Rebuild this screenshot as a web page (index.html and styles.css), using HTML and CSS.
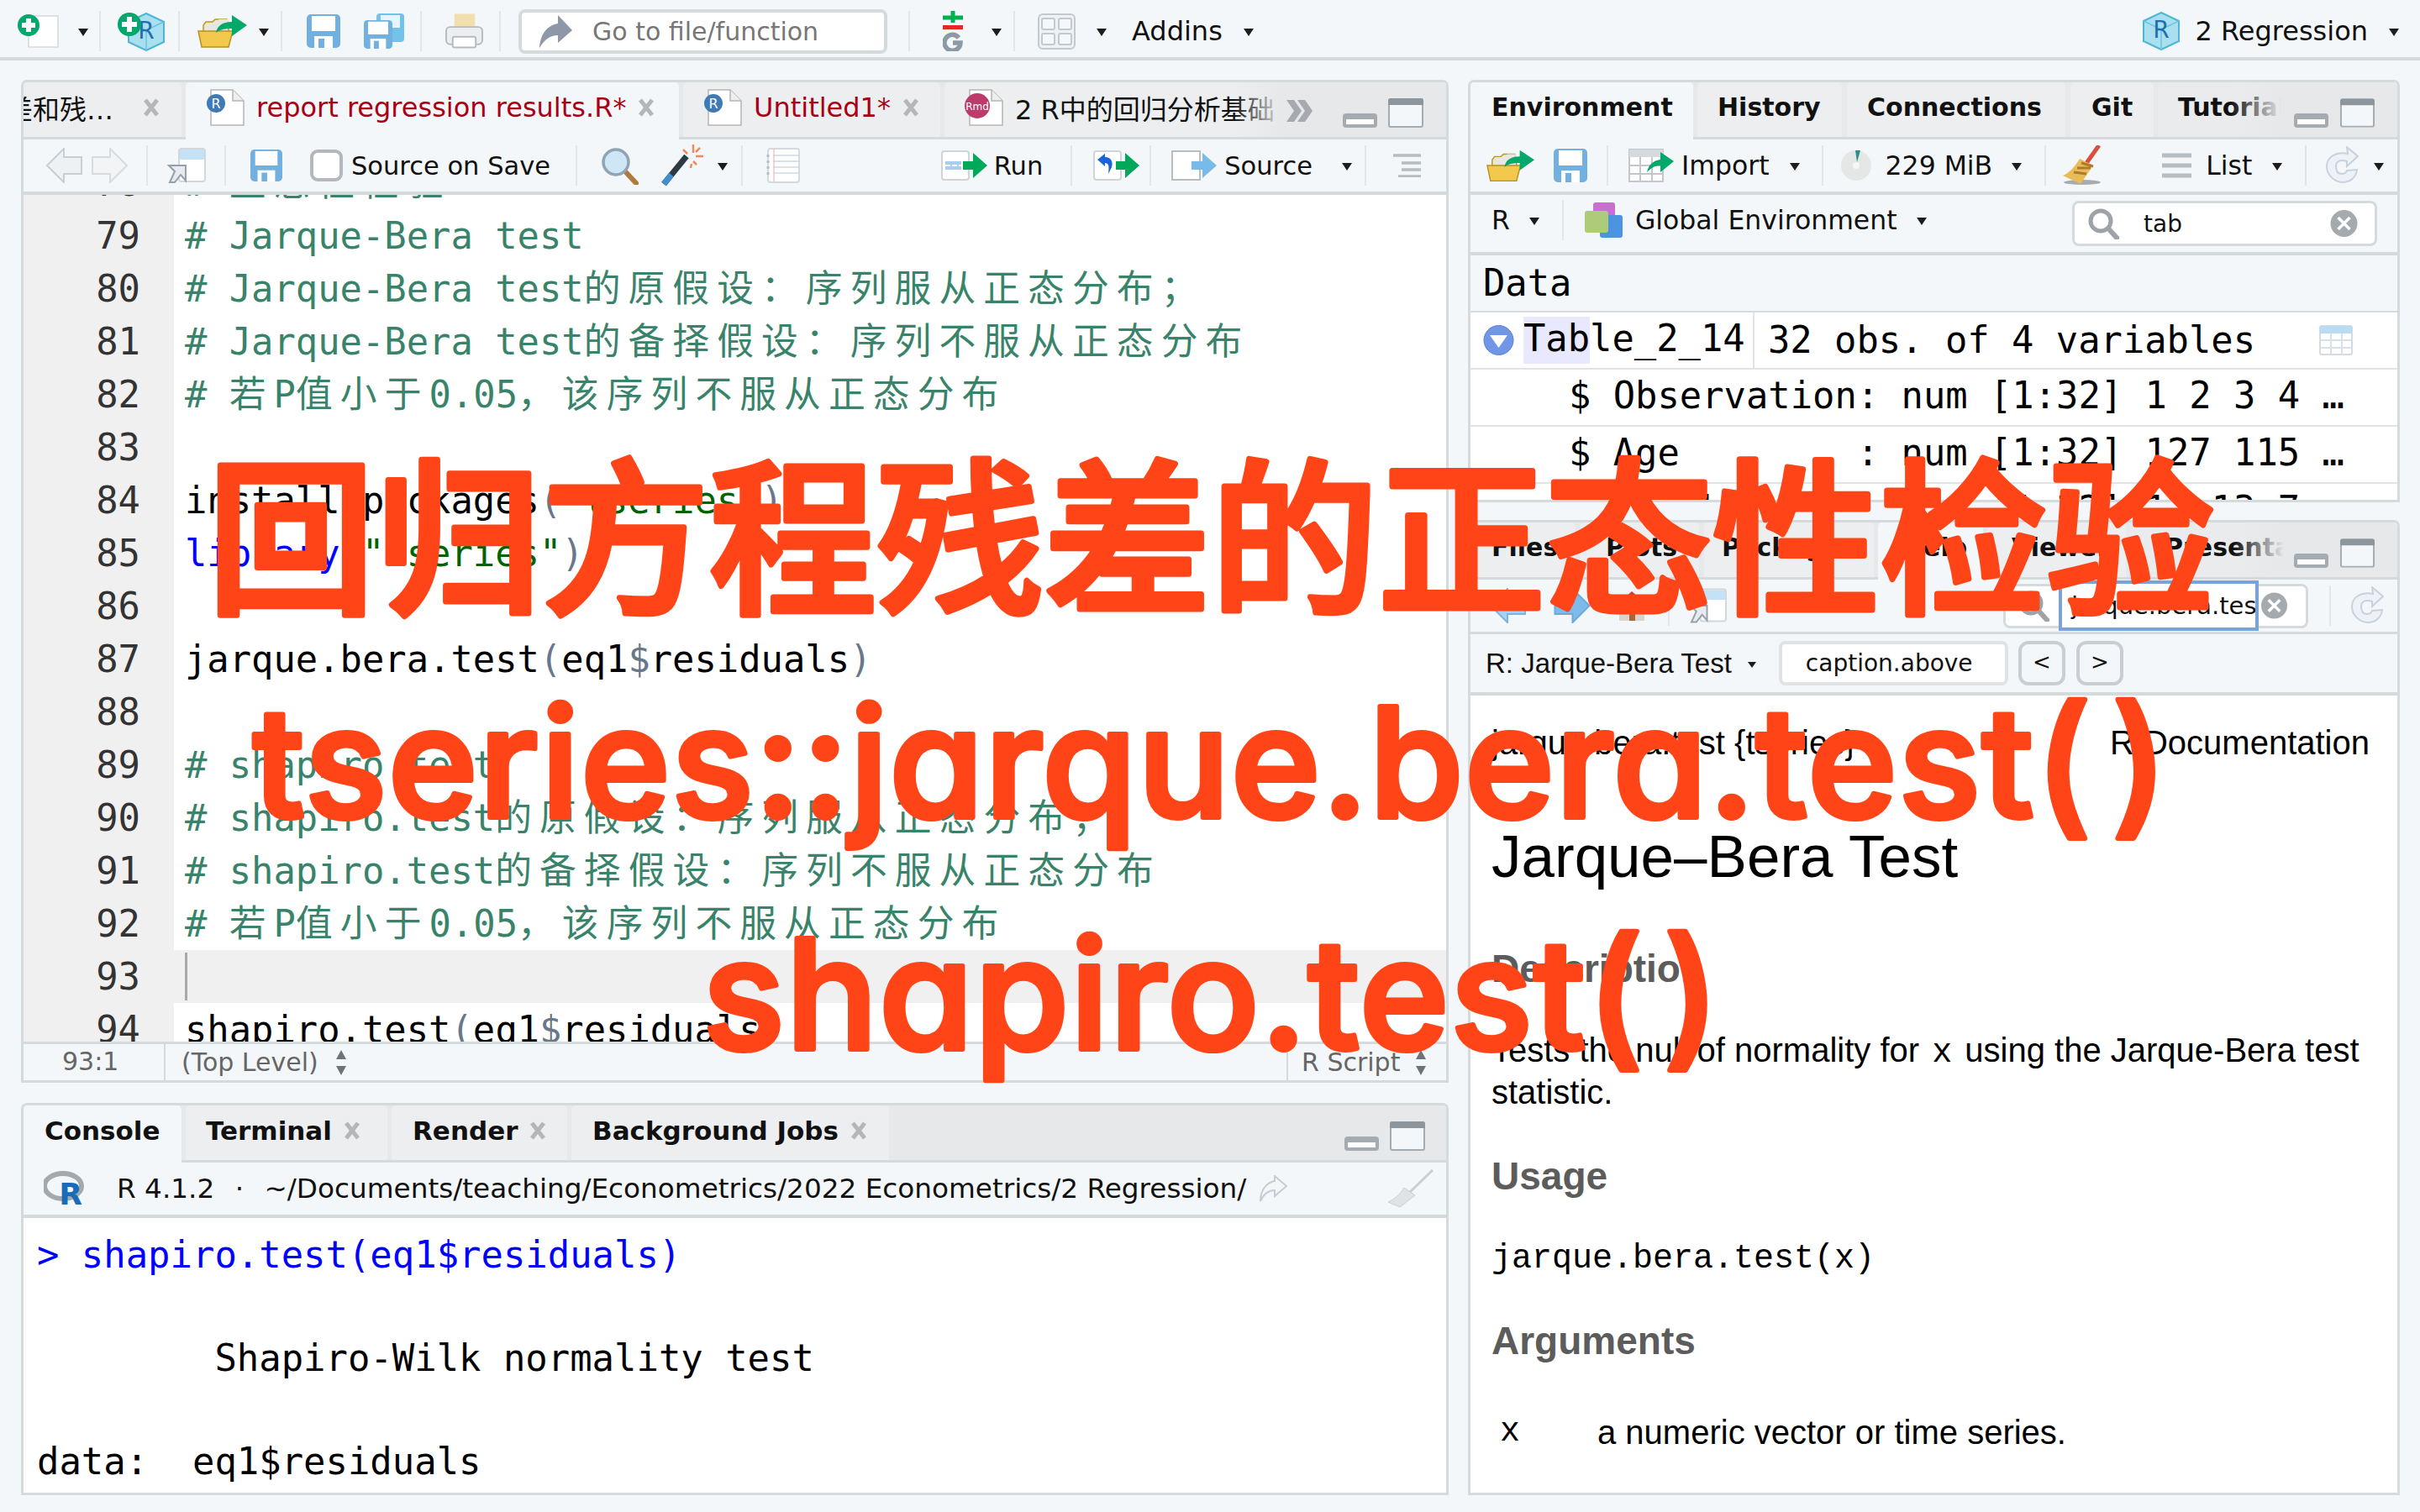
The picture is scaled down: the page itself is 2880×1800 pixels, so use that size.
FILE: index.html
```html
<!DOCTYPE html>
<html lang="zh">
<head>
<meta charset="utf-8">
<title>RStudio</title>
<link rel="stylesheet" href="styles.css">
</head>
<body>
<svg class="sprite" width="0" height="0">
  <symbol id="i-new" viewBox="0 0 50 40"><rect x="14" y="2" width="35" height="37" fill="#fff" stroke="#d5d9dc" stroke-width="1.5"/><circle cx="14" cy="13" r="13" fill="#00a86b"/><path d="M14 5v16M6 13h16" stroke="#fff" stroke-width="6"/></symbol>
  <symbol id="i-cube" viewBox="0 0 44 46"><path d="M22 1 43 11V35L22 45 1 35V11Z" fill="#a9dfef" stroke="#4db6d6" stroke-width="2"/><path d="M1 11 22 21 43 11M22 21V45" fill="none" stroke="#6cc5df" stroke-width="1.5"/><text x="22" y="31" text-anchor="middle" class="svgr" fill="#1f6fae" font-size="28">R</text></symbol>
  <symbol id="i-proj" viewBox="0 0 56 47"><use href="#i-cube" x="12" y="1" width="44" height="46"/><circle cx="14" cy="15" r="14" fill="#00a86b"/><path d="M14 6v18M5 15h18" stroke="#fff" stroke-width="6"/></symbol>
  <symbol id="i-open" viewBox="0 0 60 40"><path d="M7 36V13l3-4h8l3-3h14l2 8v22Z" fill="#efe7c0" stroke="#b7982e" stroke-width="1.5"/><path d="M11 14 26 6h10v16H11Z" fill="#e6e6e2"/><path d="M1 20H42L37 39H5Z" fill="#f2c94c" stroke="#b8911f" stroke-width="1.5"/><path d="M22 22C24 12 32 9 41 9V1L59 13 41 26V17C33 17 27 18 22 22Z" fill="#00a86b"/></symbol>
  <symbol id="i-save" viewBox="0 0 40 40"><rect width="40" height="40" rx="5" fill="#72b0df"/><rect x="6" y="2" width="28" height="18" fill="#fff"/><rect x="9" y="26" width="22" height="14" fill="#fff"/><rect x="14" y="29" width="7" height="11" fill="#72b0df"/></symbol>
  <symbol id="i-saveall" viewBox="0 0 48 42"><rect x="15" width="33" height="34" rx="4" fill="#72c3ea"/><rect x="20" y="2" width="23" height="15" fill="#e7f4fb"/><use href="#i-save" y="8" width="34" height="34"/></symbol>
  <symbol id="i-print" viewBox="0 0 46 42"><rect x="11" width="25" height="24" fill="#f1dfae"/><rect x="1" y="16" width="44" height="21" rx="5" fill="#eceef0" stroke="#b5bbc1" stroke-width="2"/><rect x="9" y="28" width="28" height="13" rx="2" fill="#fff" stroke="#b5bbc1" stroke-width="2"/></symbol>
  <symbol id="i-goto" viewBox="0 0 40 40"><path d="M23 1 40 19 23 34V25C14 25 7 30 1 40 2 24 10 13 23 11Z" fill="#8e97a8"/></symbol>
  <symbol id="i-git" viewBox="0 0 24 48"><path d="M12 0V14M0 8H24" stroke="#00b050" stroke-width="5"/><rect y="17" width="24" height="5" fill="#e02b20"/><path d="M19 32A9.500 9.500 0 1 0 21 38H12" fill="none" stroke="#8d9aa6" stroke-width="5.500"/></symbol>
  <symbol id="i-grid" viewBox="0 0 45 43"><rect x="1" y="1" width="43" height="41" rx="5" fill="#eef2f4" stroke="#c2c9cf" stroke-width="2"/><g fill="#f5f8fa" stroke="#c2c9cf" stroke-width="2"><rect x="5" y="6" width="15" height="13" rx="2"/><rect x="25" y="6" width="15" height="13" rx="2"/><rect x="5" y="24" width="15" height="13" rx="2"/><rect x="25" y="24" width="15" height="13" rx="2"/></g></symbol>
  <symbol id="i-docr" viewBox="0 0 46 44"><path d="M6 1H32L45 14V43H6Z" fill="#fff" stroke="#b5b5b5" stroke-width="1.500"/><path d="M32 1V14H45" fill="#eee" stroke="#b5b5b5" stroke-width="1.500"/><circle cx="12" cy="17" r="11" fill="#3f79b8"/><text x="12" y="23" text-anchor="middle" class="svgr" fill="#fff" font-size="16">R</text></symbol>
  <symbol id="i-docrmd" viewBox="0 0 46 44"><path d="M6 1H32L45 14V43H6Z" fill="#fff" stroke="#b5b5b5" stroke-width="1.500"/><path d="M32 1V14H45" fill="#eee" stroke="#b5b5b5" stroke-width="1.500"/><circle cx="15" cy="20" r="15" fill="#bc3a6c"/><text x="15" y="25" text-anchor="middle" class="svgr" fill="#fff" font-size="12">Rmd</text></symbol>
  <symbol id="i-x" viewBox="0 0 20 24"><path d="M3 3 17 21M17 3 3 21" stroke="#b4b7ba" stroke-width="5"/></symbol>
  <symbol id="i-chev" viewBox="0 0 34 28"><path d="M2 1H11L20 14 11 27H2L11 14ZM15 1H24L33 14 24 27H15L24 14Z" fill="#a6aaaf"/></symbol>
  <symbol id="i-min" viewBox="0 0 41 17"><rect width="41" height="17" rx="4" fill="#a4abb1"/><rect x="4" y="7" width="33" height="6" fill="#fff"/></symbol>
  <symbol id="i-max" viewBox="0 0 42 35"><rect x="1" y="1" width="40" height="33" rx="2" fill="#f3f7f9" stroke="#a4abb1" stroke-width="2"/><path d="M0 3a3 3 0 0 1 3-3H39a3 3 0 0 1 3 3V8H0Z" fill="#8e969d"/></symbol>
  <symbol id="i-back" viewBox="0 0 43 42"><path d="M1 21 21 1V11H42V31H21V41Z" fill="#eef1f3" stroke="#c9ced3" stroke-width="2"/></symbol>
  <symbol id="i-fwd" viewBox="0 0 43 42"><path d="M42 21 22 1V11H1V31H22V41Z" fill="#f2f4f6" stroke="#d7dbdf" stroke-width="2"/></symbol>
  <symbol id="i-bback" viewBox="0 0 43 42"><path d="M1 21 21 1V11H42V31H21V41Z" fill="#a6d3f3" stroke="#7db4de" stroke-width="2"/></symbol>
  <symbol id="i-bfwd" viewBox="0 0 43 42"><path d="M42 21 22 1V11H1V31H22V41Z" fill="#7cbbea" stroke="#6aa9dc" stroke-width="2"/></symbol>
  <symbol id="i-win" viewBox="0 0 46 42"><rect x="14" y="1" width="31" height="39" rx="3" fill="#fff" stroke="#d2d7dc" stroke-width="2"/><rect x="15" y="2" width="29" height="12" fill="#c4e1f5"/><path d="M3 41 9 28 2 21H22V39L16 32 9 41Z" fill="#e7ebee" stroke="#94a0ab" stroke-width="2"/></symbol>
  <symbol id="i-mag" viewBox="0 0 45 45"><path d="M28 28 42 43" stroke="#b07a3c" stroke-width="6" stroke-linecap="round"/><circle cx="18" cy="18" r="15" fill="#cfe6f7" stroke="#8fa5b6" stroke-width="3.500"/></symbol>
  <symbol id="i-wand" viewBox="0 0 52 50"><path d="M5 47 32 14" stroke="#2d3a44" stroke-width="7"/><path d="M5 47 14 36" stroke="#3f8fd0" stroke-width="7"/><path d="M40 0V10M52 14H43M48 4 43 9M28 6 33 11M44 24 40 20M38 23 37 28" stroke="#f08a5d" stroke-width="2.500"/></symbol>
  <symbol id="i-note" viewBox="0 0 40 42"><rect x="2" y="1" width="37" height="40" rx="3" fill="#fff" stroke="#d4d9de" stroke-width="2"/><path d="M8 9H38M8 16H38M8 23H38M8 30H38" stroke="#d7e4ee" stroke-width="2"/><path d="M9 2V40" stroke="#f2c6c6" stroke-width="1.500"/><path d="M2 8V36" stroke="#b6bdc3" stroke-width="3" stroke-dasharray="3 4"/></symbol>
  <symbol id="i-run" viewBox="0 0 55 36"><rect x="1" y="1" width="32" height="34" rx="3" fill="#fff" stroke="#cfd4d8" stroke-width="2"/><rect x="5" y="13" width="19" height="10" fill="#a7cdf1"/><path d="M5 18h19" stroke="#fff" stroke-width="2" stroke-dasharray="6 2"/><path d="M26 13H38V3L55 18 38 33V23H26Z" fill="#00a85a"/></symbol>
  <symbol id="i-rerun" viewBox="0 0 55 36"><rect x="1" y="1" width="32" height="34" rx="3" fill="#fff" stroke="#cfd4d8" stroke-width="2"/><path d="M5 11 14 4V8C21 8 24 13 22 20L18 28C19 20 19 15 14 15V19Z" fill="#1a63d8"/><path d="M27 13H38V3L55 18 38 33V23H27Z" fill="#00a85a"/></symbol>
  <symbol id="i-src" viewBox="0 0 54 36"><path d="M1 1H34V35H1Z" fill="#fff" stroke="#b8bdc1" stroke-width="2"/><path d="M24 13H37V3L54 18 37 33V23H24Z" fill="#79bae8"/></symbol>
  <symbol id="i-outline" viewBox="0 0 33 28"><path d="M0 2H33M10 11H33M10 19H33M6 27H33" stroke="#b5bcc2" stroke-width="3.500"/></symbol>
  <symbol id="i-import" viewBox="0 0 54 40"><rect x="1" y="1" width="40" height="38" fill="#fff" stroke="#c1c7cc" stroke-width="2"/><rect x="1" y="1" width="40" height="9" fill="#d5dade"/><path d="M14 10V39M28 10V39M1 20H41M1 30H41" stroke="#c1c7cc" stroke-width="2"/><path d="M22 28C24 18 31 14 38 13V4L54 15 38 28V20C31 20 27 23 22 28Z" fill="#00a86b"/></symbol>
  <symbol id="i-pie" viewBox="0 0 36 38"><circle cx="18" cy="19" r="18" fill="#e5e6e6"/><circle cx="18" cy="19" r="4" fill="#f3f7f9"/><path d="M17 1H23L19 15Z" fill="#2a8f85"/></symbol>
  <symbol id="i-broom" viewBox="0 0 48 48"><ellipse cx="24" cy="44" rx="22" ry="3" fill="#a8acae"/><path d="M44 0 27 24" stroke="#d9503e" stroke-width="5"/><path d="M21 16 37 24 22 46 1 36C8 33 15 26 21 16Z" fill="#e9bc5a"/><path d="M18 27 34 27M14 32 29 34M23 21 37 25" stroke="#b07a2a" stroke-width="3"/></symbol>
  <symbol id="i-list" viewBox="0 0 35 30"><path d="M0 3H35M0 15H35M0 27H35" stroke="#b5bcc2" stroke-width="5"/></symbol>
  <symbol id="i-refresh" viewBox="0 0 41 46"><path d="M28 9C14 6 3 13 3 24S13 43 22 43C31 43 38 37 39 28L27 29C26 32 24 33 21 33 16 33 14 29 14 24S18 15 27 18V24L40 12 27 1Z" fill="#edf2f6" stroke="#c7d2dc" stroke-width="2"/></symbol>
  <symbol id="i-env" viewBox="0 0 45 42"><rect x="10" width="26" height="26" rx="3" fill="#c86fcf"/><rect x="18" y="15" width="27" height="27" rx="3" fill="#4c93e0"/><rect y="10" width="28" height="26" rx="3" fill="#aecb7a"/></symbol>
  <symbol id="i-search" viewBox="0 0 37 37"><path d="M24 24 34 35" stroke="#9da3a9" stroke-width="6" stroke-linecap="round"/><circle cx="15" cy="15" r="12" fill="#fff" stroke="#9da3a9" stroke-width="5"/></symbol>
  <symbol id="i-clear" viewBox="0 0 32 34"><circle cx="16" cy="17" r="16" fill="#a5aaaf"/><path d="M9 10 23 24M23 10 9 24" stroke="#fff" stroke-width="3.500"/></symbol>
  <symbol id="i-expand" viewBox="0 0 37 36"><circle cx="18.500" cy="18" r="17.500" fill="#6f97e6" stroke="#5a82d0"/><path d="M8 12H29L18.500 27Z" fill="#fff"/></symbol>
  <symbol id="i-table" viewBox="0 0 40 36"><rect x="1" y="1" width="38" height="34" rx="2" fill="#fff" stroke="#d3dce3" stroke-width="2"/><rect x="1" y="1" width="38" height="9" fill="#b9dcf3"/><path d="M14 10V35M27 10V35M1 18H39M1 27H39" stroke="#d8e1e8" stroke-width="2"/></symbol>
  <symbol id="i-home" viewBox="0 0 40 36"><path d="M2 17 20 1 38 17Z" fill="#c93c2e"/><rect x="5" y="14" width="30" height="22" fill="#d9d5cc"/><rect x="17" y="14" width="7" height="22" fill="#a8663a"/></symbol>
  <symbol id="i-rlogo" viewBox="0 0 48 42"><ellipse cx="23" cy="18" rx="22" ry="15" fill="none" stroke="#a4a9ae" stroke-width="6"/><text x="32" y="40" text-anchor="middle" class="svgr svgb" fill="#1a6cb8" font-size="36">R</text></symbol>
  <symbol id="i-share" viewBox="0 0 34 32"><path d="M19 1 33 13 19 25V18C12 18 6 22 2 31 2 19 8 9 19 7Z" fill="#f4f6f8" stroke="#c6ccd2" stroke-width="2"/></symbol>
  <symbol id="i-broompale" viewBox="0 0 56 46"><path d="M54 1 27 27" stroke="#c9ced3" stroke-width="3"/><path d="M20 22 33 31 15 45 1 39C8 36 15 30 20 22Z" fill="#dfe3e6" stroke="#c9ced3"/></symbol>
  <symbol id="i-updown" viewBox="0 0 14 30"><path d="M7 0 13 11H1ZM7 30 13 19H1Z" fill="#6d7378"/></symbol>
</svg>

<div class="app">
  <header class="topbar">
    <svg class="ml-20" width="50" height="40"><use href="#i-new"/></svg><i class="caret ml-23"></i><i class="sep ml-13"></i>
    <svg class="ml-20" width="56" height="47"><use href="#i-proj"/></svg><i class="sep ml-16"></i>
    <svg class="ml-21" width="60" height="40"><use href="#i-open"/></svg><i class="caret ml-13"></i><i class="sep ml-14"></i>
    <svg class="ml-29" width="40" height="40"><use href="#i-save"/></svg>
    <svg class="ml-28" width="48" height="42"><use href="#i-saveall"/></svg><i class="sep ml-19"></i>
    <svg class="ml-28" width="45" height="42"><use href="#i-print"/></svg><i class="sep ml-19"></i>
    <div class="goto ml-21"><svg width="40" height="40"><use href="#i-goto"/></svg><span>Go to file/function</span></div><i class="sep ml-25"></i>
    <svg class="ml-39" width="24" height="48"><use href="#i-git"/></svg><i class="caret ml-34"></i><i class="sep ml-14"></i>
    <svg class="ml-27" width="45" height="43"><use href="#i-grid"/></svg><i class="caret ml-25"></i>
    <span class="lbl ml-30">Addins</span><i class="caret ml-25"></i>
    <svg class="push" width="44" height="46"><use href="#i-cube"/></svg>
    <span class="lbl ml-18">2 Regression</span><i class="caret ml-25 mr-25"></i>
  </header>

  <main class="workspace">
    <section class="column">
      <div class="pane source">
        <div class="tabs">
          <div class="tab t-prev"><span class="prev-text">差和残…</span><svg class="tx" width="20" height="24"><use href="#i-x"/></svg></div>
          <div class="tab active t-report"><svg width="46" height="44"><use href="#i-docr"/></svg><span class="dirty ml-14">report regression results.R*</span><svg class="ml-14" width="20" height="24"><use href="#i-x"/></svg></div>
          <div class="tab t-untitled"><svg width="46" height="44"><use href="#i-docr"/></svg><span class="dirty ml-14">Untitled1*</span><svg class="ml-14" width="20" height="24"><use href="#i-x"/></svg></div>
          <div class="tab fade t-rmd"><svg width="46" height="44"><use href="#i-docrmd"/></svg><span class="ml-14 nowrap">2 R中的回归分析基础</span></div>
          <svg class="chev" width="34" height="28"><use href="#i-chev"/></svg>
          <svg class="push-min" width="41" height="17"><use href="#i-min"/></svg>
          <svg class="max" width="42" height="35"><use href="#i-max"/></svg>
        </div>
        <div class="bar">
          <svg class="ml-27" width="43" height="42"><use href="#i-back"/></svg>
          <svg class="ml-11" width="43" height="42"><use href="#i-fwd"/></svg><i class="sep ml-22"></i>
          <svg class="ml-23" width="46" height="42"><use href="#i-win"/></svg><i class="sep ml-22"></i>
          <svg class="ml-29" width="38" height="40"><use href="#i-save"/></svg>
          <i class="check ml-33"></i><span class="lbl s30 ml-10">Source on Save</span><i class="sep ml-30"></i>
          <svg class="ml-28" width="45" height="45"><use href="#i-mag"/></svg>
          <svg class="ml-25" width="52" height="50"><use href="#i-wand"/></svg><i class="caret ml-17"></i><i class="sep ml-16"></i>
          <svg class="ml-28" width="40" height="42"><use href="#i-note"/></svg>
          <svg class="push" width="55" height="36"><use href="#i-run"/></svg><span class="lbl s30 ml-8">Run</span><i class="sep ml-33"></i>
          <svg class="ml-25" width="55" height="36"><use href="#i-rerun"/></svg><i class="sep ml-12"></i>
          <svg class="ml-24" width="54" height="36"><use href="#i-src"/></svg><span class="lbl s30 ml-9">Source</span><i class="caret ml-35"></i><i class="sep ml-15"></i>
          <svg class="ml-32 mr-30" width="33" height="28"><use href="#i-outline"/></svg>
        </div>
        <div class="editor">
          <div class="gutter">
            <div>78</div><div>79</div><div>80</div><div>81</div><div>82</div><div>83</div><div>84</div><div>85</div><div>86</div><div>87</div><div>88</div><div>89</div><div>90</div><div>91</div><div>92</div><div class="cur">93</div><div>94</div>
          </div>
          <div class="code">
            <div class="cmt"># <span class="c">正态性检验</span></div>
            <div class="cmt"># Jarque-Bera test</div>
            <div class="cmt"># Jarque-Bera test<span class="c">的原假设：序列服从正态分布；</span></div>
            <div class="cmt"># Jarque-Bera test<span class="c">的备择假设：序列不服从正态分布</span></div>
            <div class="cmt"># <span class="c">若</span>P<span class="c">值小于</span>0.05<span class="c">，该序列不服从正态分布</span></div>
            <div>&nbsp;</div>
            <div>install.packages<b class="op">(</b><span class="str">"tseries"</span><b class="op">)</b></div>
            <div><span class="kw">library</span><b class="op">(</b><span class="str">"tseries"</span><b class="op">)</b></div>
            <div>&nbsp;</div>
            <div>jarque.bera.test<b class="op">(</b>eq1<b class="op">$</b>residuals<b class="op">)</b></div>
            <div>&nbsp;</div>
            <div class="cmt"># shapiro.test</div>
            <div class="cmt"># shapiro.test<span class="c">的原假设：序列服从正态分布；</span></div>
            <div class="cmt"># shapiro.test<span class="c">的备择假设：序列不服从正态分布</span></div>
            <div class="cmt"># <span class="c">若</span>P<span class="c">值小于</span>0.05<span class="c">，该序列不服从正态分布</span></div>
            <div class="cur"><i class="cursor"></i>&nbsp;</div>
            <div>shapiro.test<b class="op">(</b>eq1<b class="op">$</b>residuals<b class="op">)</b></div>
          </div>
        </div>
        <div class="status">
          <div class="st-pos">93:1</div>
          <div class="st-scope">(Top Level)<svg class="ml-20" width="14" height="30"><use href="#i-updown"/></svg></div>
          <div class="st-type">R Script<svg class="ml-18" width="14" height="30"><use href="#i-updown"/></svg></div>
        </div>
      </div>

      <div class="pane console">
        <div class="tabs">
          <div class="tab active bold t-console">Console</div>
          <div class="tab bold t-term">Terminal<svg class="ml-14" width="20" height="24"><use href="#i-x"/></svg></div>
          <div class="tab bold t-render">Render<svg class="ml-14" width="20" height="24"><use href="#i-x"/></svg></div>
          <div class="tab bold t-jobs">Background Jobs<svg class="ml-14" width="20" height="24"><use href="#i-x"/></svg></div>
          <svg class="push-min" width="41" height="17"><use href="#i-min"/></svg>
          <svg class="max" width="42" height="35"><use href="#i-max"/></svg>
        </div>
        <div class="bar">
          <svg class="ml-24" width="48" height="42"><use href="#i-rlogo"/></svg>
          <span class="lbl path ml-39">R 4.1.2 <span class="dot">·</span> ~/Documents/teaching/Econometrics/2022 Econometrics/2 Regression/</span>
          <svg class="ml-15" width="34" height="32"><use href="#i-share"/></svg>
          <svg class="push mr-14" width="56" height="46"><use href="#i-broompale"/></svg>
        </div>
        <pre class="terminal"><span class="kw">&gt; shapiro.test(eq1$residuals)</span>

	Shapiro-Wilk normality test

data:  eq1$residuals</pre>
      </div>
    </section>

    <section class="column">
      <div class="pane env">
        <div class="tabs">
          <div class="tab active bold t-env">Environment</div>
          <div class="tab bold t-hist">History</div>
          <div class="tab bold t-conn">Connections</div>
          <div class="tab bold t-git">Git</div>
          <div class="tab bold fade t-tut">Tutorial</div>
          <svg class="min-r" width="41" height="17"><use href="#i-min"/></svg>
          <svg class="max-r" width="41" height="35"><use href="#i-max"/></svg>
        </div>
        <div class="bar">
          <svg class="ml-19" width="58" height="40"><use href="#i-open"/></svg>
          <svg class="ml-22" width="40" height="40"><use href="#i-save"/></svg><i class="sep ml-23"></i>
          <svg class="ml-24" width="54" height="40"><use href="#i-import"/></svg><span class="lbl ml-9">Import</span><i class="caret ml-24"></i><i class="sep ml-26"></i>
          <svg class="ml-21" width="36" height="38"><use href="#i-pie"/></svg><span class="lbl ml-17">229 MiB</span><i class="caret ml-23"></i><i class="sep ml-27"></i>
          <svg class="ml-19" width="48" height="48"><use href="#i-broom"/></svg>
          <svg class="ml-71" width="35" height="30"><use href="#i-list"/></svg><span class="lbl ml-17">List</span><i class="caret ml-24"></i><i class="sep ml-27"></i>
          <svg class="ml-21" width="41" height="46"><use href="#i-refresh"/></svg><i class="caret ml-18"></i>
        </div>
        <div class="bar tall">
          <span class="lbl ml-25">R</span><i class="caret ml-23"></i><i class="sep ml-27"></i>
          <svg class="ml-25" width="45" height="42"><use href="#i-env"/></svg><span class="lbl ml-15">Global Environment</span><i class="caret ml-23"></i>
          <div class="searchbox env-search"><svg class="ml-16" width="37" height="37"><use href="#i-search"/></svg><span class="s28 ml-29">tab</span><svg class="push" width="33" height="34"><use href="#i-clear"/></svg></div>
        </div>
        <div class="data-head">Data</div>
        <div class="envlist">
          <div class="row"><svg class="exp" width="37" height="36"><use href="#i-expand"/></svg><span class="var"><span class="hl">Tab</span>le_2_14</span><span class="desc">32 obs. of 4 variables</span><svg class="tbl" width="40" height="36"><use href="#i-table"/></svg></div>
          <div class="row sub">$ Observation: num [1:32] 1 2 3 4 …</div>
          <div class="row sub">$ Age        : num [1:32] 127 115 …</div>
          <div class="row sub">$ Height     : num [1:32] 12 13 7</div>
        </div>
      </div>

      <div class="pane files">
        <div class="tabs">
          <div class="tab bold t-files">Files</div>
          <div class="tab bold t-plots">Plots</div>
          <div class="tab bold t-pack">Packages</div>
          <div class="tab active bold t-help">Help</div>
          <div class="tab bold t-view">Viewer</div>
          <div class="tab bold fade t-pres">Presentation</div>
          <svg class="min-r" width="41" height="17"><use href="#i-min"/></svg>
          <svg class="max-r" width="41" height="35"><use href="#i-max"/></svg>
        </div>
        <div class="bar">
          <svg class="ml-23" width="43" height="42"><use href="#i-bback"/></svg>
          <svg class="ml-33" width="44" height="42"><use href="#i-bfwd"/></svg>
          <svg class="ml-29" width="40" height="36"><use href="#i-home"/></svg><i class="sep ml-23"></i>
          <svg class="ml-23" width="45" height="42"><use href="#i-win"/></svg>
          <div class="searchbox help-search"><svg class="ml-15" width="37" height="37"><use href="#i-search"/></svg><div class="focused">jarque.bera.test</div><svg class="ml-3" width="31" height="34"><use href="#i-clear"/></svg></div>
          <i class="sep ml-25"></i>
          <svg class="ml-22 mr-16" width="41" height="46"><use href="#i-refresh"/></svg>
        </div>
        <div class="bar helpbar">
          <span class="topic ml-18">R: Jarque-Bera Test</span><i class="caret small ml-19"></i>
          <div class="findbox ml-27">caption.above</div>
          <div class="nav ml-12">&lt;</div><div class="nav ml-13">&gt;</div>
        </div>
        <article class="help">
          <div class="help-head"><span>jarque.bera.test {tseries}</span><span>R Documentation</span></div>
          <h1>Jarque–Bera Test</h1>
          <h2 class="h-desc">Description</h2>
          <p>Tests the null of normality for <code>x</code> using the Jarque-Bera test statistic.</p>
          <h2 class="h-usage">Usage</h2>
          <pre>jarque.bera.test(x)</pre>
          <h2 class="h-args">Arguments</h2>
          <div class="arg"><code>x</code><span>a numeric vector or time series.</span></div>
        </article>
      </div>
    </section>
  </main>
</div>

<svg class="overlay" width="2880" height="1800">
  <text x="1441" y="715" text-anchor="middle" class="ov ov-cn">回归方程残差的正态性检验</text>
  <text x="1441" y="973" text-anchor="middle" class="ov ov-en">tseries::jarque.bera.test<tspan class="par">(</tspan>)</text>
  <text x="1442" y="1249" text-anchor="middle" class="ov ov-en">shapiro.test<tspan class="par">(</tspan>)</text>
</svg>
</body>
</html>
```

FILE: styles.css
```css
* { box-sizing: border-box; }
html, body { margin: 0; padding: 0; }
body {
  width: 2880px; height: 1800px; overflow: hidden; position: relative;
  background: #f3f7f9; color: #111;
  font-family: "DejaVu Sans", "Noto Sans CJK SC", sans-serif; font-size: 31.5px;
}
.sprite { position: absolute; }
svg { display: block; flex: none; }
.svgr { font-family: "DejaVu Sans", sans-serif; }
.svgb { font-weight: 700; }
i { font-style: normal; }

.ml-3{margin-left:3px}.ml-8{margin-left:8px}.ml-9{margin-left:9px}.ml-10{margin-left:10px}.ml-11{margin-left:11px}.ml-12{margin-left:12px}.ml-13{margin-left:13px}.ml-14{margin-left:14px}.ml-15{margin-left:15px}.ml-16{margin-left:16px}.ml-17{margin-left:17px}.ml-18{margin-left:18px}.ml-19{margin-left:19px}.ml-20{margin-left:20px}.ml-21{margin-left:21px}.ml-22{margin-left:22px}.ml-23{margin-left:23px}.ml-24{margin-left:24px}.ml-25{margin-left:25px}.ml-26{margin-left:26px}.ml-27{margin-left:27px}.ml-28{margin-left:28px}.ml-29{margin-left:29px}.ml-30{margin-left:30px}.ml-32{margin-left:32px}.ml-33{margin-left:33px}.ml-34{margin-left:34px}.ml-35{margin-left:35px}.ml-39{margin-left:39px}.ml-71{margin-left:71px}
.mr-14{margin-right:14px}.mr-16{margin-right:16px}.mr-25{margin-right:25px}.mr-30{margin-right:30px}
.push { margin-left: auto; }
.nowrap { white-space: nowrap; }

.caret { flex: none; width: 0; height: 0; border-left: 6px solid transparent; border-right: 6px solid transparent; border-top: 9px solid #1c1c1c; margin-top: 3px; }
.caret.small { border-left-width: 5px; border-right-width: 5px; border-top-width: 7px; }
.sep { flex: none; width: 2px; height: 48px; background: #e2e6e9; }
.lbl { white-space: nowrap; color: #111; }
.s30 { font-size: 30.5px; }
.s28 { font-size: 28px; }

.app { height: 1800px; display: flex; flex-direction: column; }
.topbar { height: 72px; padding-top: 6px; border-bottom: 4px solid #d5dadd; display: flex; align-items: center; flex: none; font-size: 32px; }
.goto { width: 439px; height: 53px; border: 4px solid #d5dadd; border-radius: 8px; background: #fff; display: flex; align-items: center; padding-left: 20px; color: #777; font-size: 30px; }
.goto span { margin-left: 24px; white-space: nowrap; }

.workspace { flex: 1; display: grid; grid-template-columns: 1699px 1109px; column-gap: 23px; padding: 23px 0 20px 25px; min-height: 0; }
.column { display: flex; flex-direction: column; min-height: 0; min-width: 0; }
.pane { border: 3px solid #d5dadd; border-radius: 7px 7px 0 0; display: flex; flex-direction: column; overflow: hidden; background: #f3f7f9; }
.source { height: 1194px; }
.console { height: 467px; margin-top: 24px; }
.env { height: 503px; }
.files { height: 1161px; margin-top: 21px; }

.tabs { height: 68px; flex: none; display: flex; align-items: stretch; background: #e6e8ea; border-bottom: 3px solid #d5dadd; position: relative; }
.tab { display: flex; align-items: center; flex: none; height: 65px; padding-bottom: 6px; background: #eceef0; margin-right: 5px; overflow: hidden; white-space: nowrap; font-size: 32px; border-radius: 5px 5px 0 0; }
.tab.bold { font-weight: 700; font-size: 30px; color: #111; }
.console .tab.bold { font-size: 31px; }
.tab.active { background: #f3f7f9; height: 68px; padding-bottom: 9px; }
.dirty { color: #a80015; }
.fade { position: relative; }
.fade::after { content: ""; position: absolute; right: 0; top: 0; bottom: 0; width: 60px; background: linear-gradient(90deg, rgba(230,232,234,0), #e6e8ea); }
.t-prev { width: 188px; }
.prev-text { width: 150px; flex: none; margin-left: -21px; overflow: visible; }
.tx { margin-left: 13px; }
.t-report { width: 587px; padding-left: 24px; }
.t-untitled { width: 306px; padding-left: 24px; }
.t-rmd { width: 404px; padding-left: 24px; margin-right: 0; }
.chev { margin: 20px 0 0 1px; }
.push-min { margin: 37px 0 0 35px; }
.source .push-min { margin-left: 35px; }
.console .push-min { margin-left: auto; }
.max { margin: 19px 25px 0 13px; }
.min-r { position: absolute; left: 980px; top: 37px; }
.max-r { position: absolute; left: 1035px; top: 19px; }
.t-console { width: 188px; padding-left: 25px; }
.t-term { width: 240px; padding-left: 24px; }
.t-render { width: 209px; padding-left: 25px; }
.t-jobs { width: 378px; padding-left: 25px; margin-right: 0; }
.t-env { width: 265px; padding-left: 25px; }
.t-hist { width: 172px; padding-left: 24px; margin-right: 6px; }
.t-conn { width: 260px; padding-left: 24px; margin-right: 6px; }
.t-git { width: 99px; padding-left: 25px; }
.t-tut { width: 147px; padding-left: 24px; margin-right: 0; background: #e9ebed; }
.t-files { width: 125px; padding-left: 25px; }
.t-plots { width: 142px; padding-left: 31px; margin-right: 6px; }
.t-pack { width: 202px; padding-left: 21px; }
.t-help { width: 125px; padding-left: 29px; }
.t-view { width: 165px; padding-left: 29px; }
.t-pres { width: 183px; padding-left: 41px; margin-right: 0; background: #e9ebed; }

.bar { height: 66px; flex: none; display: flex; align-items: center; border-bottom: 4px solid #d5dadd; background: #f3f7f9; }
.bar.tall { height: 72px; padding-bottom: 8px; }
.files .bar { height: 65px; border-bottom-width: 3px; }
.files .bar.helpbar { height: 73px; border-bottom-width: 4px; }
.check { flex: none; width: 39px; height: 38px; border: 4px solid #b4b8bc; border-radius: 9px; background: #fff; }

.editor { flex: 1; min-height: 0; overflow: hidden; display: flex; background: #fff; font-family: "DejaVu Sans Mono", "Noto Sans CJK SC", monospace; font-size: 43.8px; line-height: 63px; color: #000; }
.gutter { width: 179px; flex: none; background: #f0f0f0; color: #333; text-align: right; padding-right: 40px; margin-top: -46px; height: 1100px; }
.code { flex: 1; margin-top: -46px; }
.code > div { padding-left: 13px; height: 63px; position: relative; white-space: pre; }
.code > div.cur { background: #f0f0f0; }
.cursor { position: absolute; left: 13px; top: 3px; width: 3px; height: 57px; background: #a9a9a9; }
.cmt { color: #39836a; }
.c { letter-spacing: 9.05px; }
.op { font-weight: 400; color: #68778a; }
.str { color: #006400; }
.kw { color: #0000ff; }

.status { height: 46px; flex: none; display: flex; border-top: 3px solid #d5dadd; color: #666; font-size: 30px; }
.st-pos { width: 169px; padding-left: 46px; border-right: 2px solid #d5dadd; line-height: 42px; }
.st-scope { flex: 1; padding-left: 19px; display: flex; align-items: center; }
.st-type { width: 190px; padding-left: 16px; border-left: 2px solid #d5dadd; display: flex; align-items: center; white-space: nowrap; }

.path { font-size: 32.7px; }
.dot { margin: 0 14px; }
.terminal { flex: 1; margin: 0; background: #fff; padding: 13px 0 0 16px; font-family: "DejaVu Sans Mono", monospace; font-size: 43.9px; line-height: 61.5px; tab-size: 8; color: #000; overflow: hidden; }

.searchbox { display: flex; align-items: center; background: #fff; border: 3px solid #d5dadd; border-radius: 8px; }
.env-search { margin: 8px 24px 0 auto; width: 363px; height: 54px; padding-right: 20px; }
.help-search { margin-left: auto; width: 363px; height: 53px; }
.focused { width: 238px; height: 60px; margin: 0 0 0 11px; flex: none; border: 4px solid #7aa4d8; background: #fff; padding-left: 11px; font-size: 29px; line-height: 52px; overflow: hidden; white-space: nowrap; }

.data-head { height: 68px; flex: none; border-bottom: 2px solid #d5dadd; font-family: "DejaVu Sans Mono", monospace; font-size: 43.8px; line-height: 66px; padding-left: 15px; color: #000; }
.envlist { flex: 1; min-height: 0; overflow: hidden; background: #fff; font-family: "DejaVu Sans Mono", monospace; font-size: 43.8px; color: #000; }
.row { height: 68px; border-bottom: 2px solid #e0e4e7; line-height: 62px; white-space: pre; display: flex; align-items: center; }
.row.sub { display: block; padding-left: 117px; }
.exp { margin-left: 15px; }
.var { margin-left: 11px; width: 275px; flex: none; height: 66px; line-height: 62px; border-right: 2px solid #e0e4e7; }
.hl { background: #e8e8ff; display: inline-block; height: 56px; line-height: 52px; }
.desc { margin-left: 16px; flex: 1; }
.tbl { margin-right: 53px; }

.topic { font-family: "Liberation Sans", sans-serif; font-size: 33px; white-space: nowrap; }
.findbox { width: 273px; height: 53px; border: 4px solid #dfe3e6; border-radius: 8px; background: #fff; font-size: 28px; line-height: 46px; padding-left: 28px; white-space: nowrap; }
.nav { width: 56px; height: 53px; border: 4px solid #c9ced2; border-radius: 12px; background: #f3f7f9; text-align: center; font-size: 26px; line-height: 42px; }

.help { flex: 1; min-height: 0; background: #fff; padding: 32px 33px 0 25px; font-family: "Liberation Sans", sans-serif; font-size: 40px; line-height: 48px; color: #000; overflow: hidden; }
.help-head { display: flex; justify-content: space-between; }
.help h1 { font-weight: 400; font-size: 71px; line-height: 80px; margin: 72px 0 0; }
.help h2 { font-size: 46px; line-height: 54px; color: #5c5c5c; margin: 0; }
.h-desc { margin-top: 66px !important; }
.h-usage { margin-top: 50px !important; }
.h-args { margin-top: 46px !important; }
.help p { margin: 47px 0 0; line-height: 46px; }
.help p code { margin: 0 4px; }
.help code { font-family: "Liberation Mono", monospace; font-size: 40px; }
.help pre { margin: 48px 0 0; font-family: "Liberation Mono", monospace; font-size: 40px; line-height: 48px; }
.arg { margin-top: 58px; display: flex; }
.arg code { margin-left: 10px; width: 116px; flex: none; }

.overlay { position: absolute; left: 0; top: 0; pointer-events: none; }
.ov { fill: #ff4517; stroke: #ff4517; stroke-linejoin: round; stroke-linecap: round; }
.ov-cn { font-family: "Noto Sans CJK SC", sans-serif; font-weight: 500; font-size: 199px; stroke-width: 7px; }
.ov-en { font-family: "Inter", sans-serif; font-weight: 500; font-size: 182px; stroke-width: 6px; letter-spacing: 1.25px; font-feature-settings: "cv11"; }
.par { letter-spacing: 24px; }
```
